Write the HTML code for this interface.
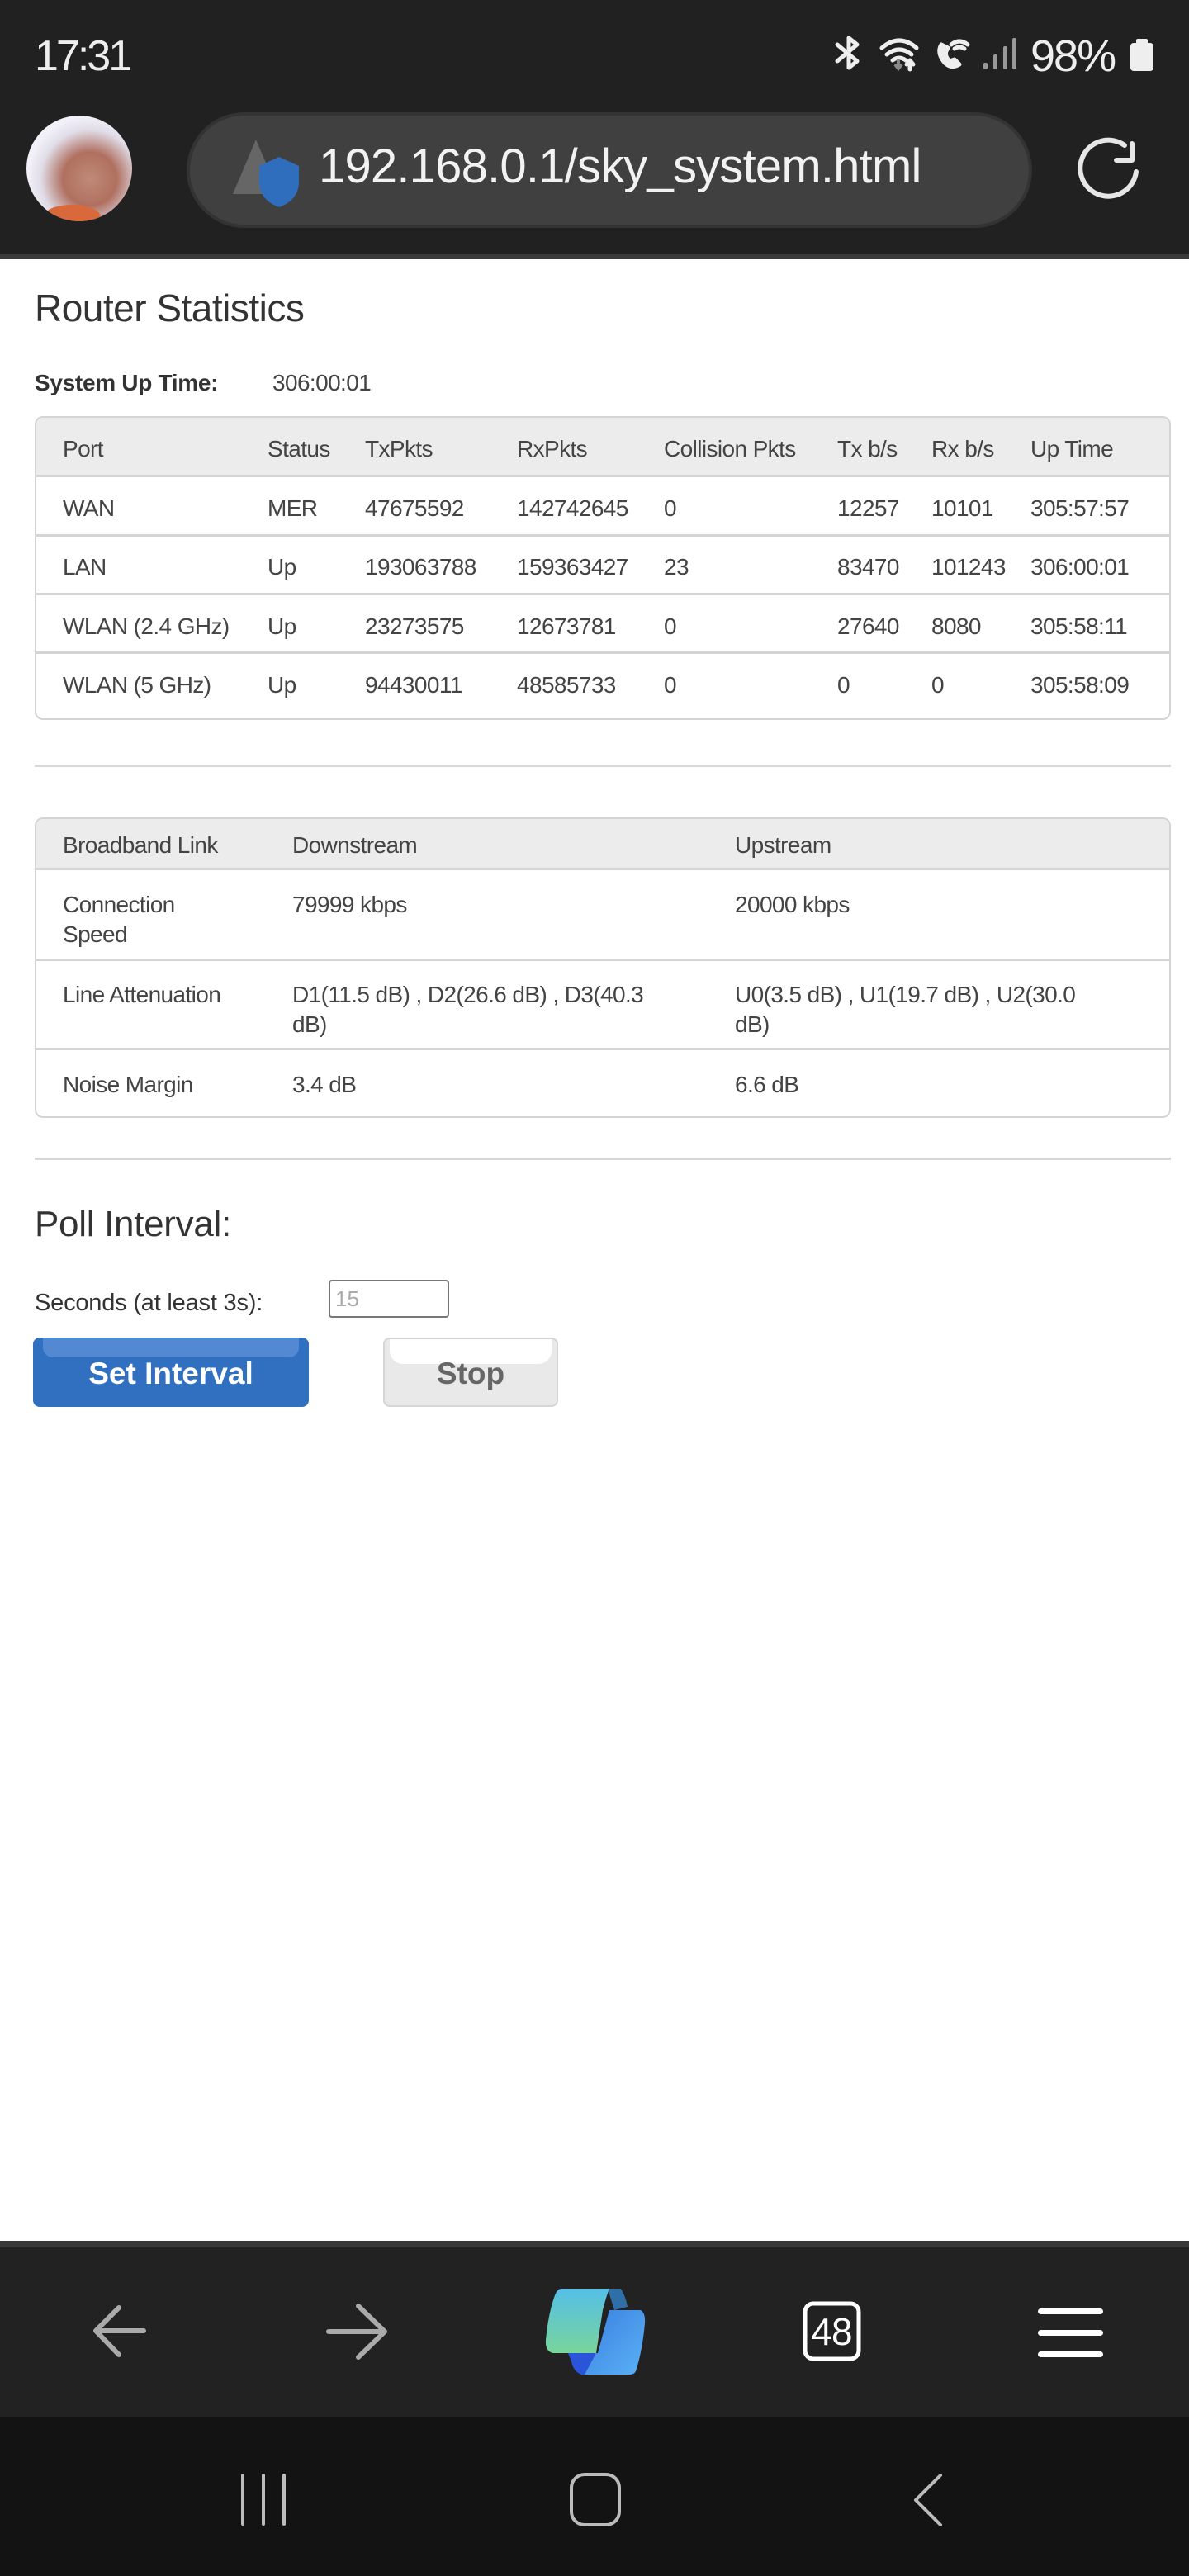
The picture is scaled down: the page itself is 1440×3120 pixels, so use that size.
<!DOCTYPE html>
<html><head><meta charset="utf-8">
<style>
*{margin:0;padding:0;box-sizing:border-box}
html,body{width:1440px;height:3120px;overflow:hidden;background:#fff;font-family:"Liberation Sans",sans-serif}
.a{position:absolute;white-space:nowrap}
.t{font-size:28px;color:#444;letter-spacing:-0.6px;line-height:36px}
</style></head><body>
<!-- top bar -->
<div class="a" style="left:0;top:0;width:1440px;height:310px;background:#212121"></div>
<div class="a" style="left:0;top:308px;width:1440px;height:6px;background:#3a3a3a"></div>
<div class="a" style="left:42px;top:38px;font-size:52px;color:#eee;letter-spacing:-3px">17:31</div>
<svg class="a" style="left:1000px;top:28px" width="440" height="70" viewBox="0 0 440 70">
 <g stroke="#eee" stroke-width="5" fill="none" stroke-linecap="round" stroke-linejoin="round">
  <path d="M14 26 L38 46 L28 54 L28 18 L38 26 L14 46"/>
  <path d="M68 30 Q89 12 110 30 M74 38 Q89 26 104 38 M81 45 Q89 39 97 45"/>
  <path d="M102 56 V46 M98 50 L102 45 L106 50"/>
  <path d="M140 26 Q134 36 144 48 Q152 56 162 50 L156 44 L150 46 Q144 40 146 34 L148 30 Z" fill="#eee"/>
  <path d="M152 26 Q162 18 172 26 M156 31 Q162 27 168 31"/>
 </g>
 <path d="M88 44 v10 m-4 -4 l4 5 l4 -5" stroke="#888" stroke-width="4" fill="none"/>
 <g fill="#999"><rect x="191" y="48" width="5" height="8" rx="2"/><rect x="203" y="38" width="5" height="18" rx="2"/><rect x="215" y="28" width="5" height="28" rx="2"/><rect x="226" y="18" width="5" height="38" rx="2"/></g>
 <rect x="369" y="24" width="28" height="34" rx="4" fill="#eee"/><rect x="376" y="19" width="14" height="6" rx="2" fill="#eee"/>
</svg>
<div class="a" style="left:1248px;top:37px;font-size:54px;color:#eee;letter-spacing:-2px">98%</div>
<!-- avatar -->
<div class="a" style="left:32px;top:140px;width:128px;height:128px;border-radius:50%;background:radial-gradient(circle at 60% 60%,#c08a78 0,#b07060 30%,#e0dde8 55%,#f2f0f8 70%);overflow:hidden"><div style="position:absolute;left:20px;top:108px;width:70px;height:30px;background:#d9683a;border-radius:50%"></div></div>
<!-- url pill -->
<div class="a" style="left:226px;top:136px;width:1024px;height:140px;border-radius:70px;background:#404040;border:4px solid #333"></div>
<svg class="a" style="left:280px;top:165px" width="90" height="90" viewBox="0 0 90 90">
 <path d="M30 4 L2 70 L58 70 Z" fill="#666"/>
 <path d="M58 25 L82 36 V58 Q80 78 58 86 Q36 78 34 58 V36 Z" fill="#2f6dbd"/>
</svg>
<div class="a" style="left:386px;top:168px;font-size:58px;color:#f2f2f2;letter-spacing:-0.8px">192.168.0.1/sky_system.html</div>
<svg class="a" style="left:1300px;top:160px" width="90" height="90" viewBox="0 0 90 90">
 <path d="M76 48 A34 34 0 1 1 62 16" stroke="#e6e6e6" stroke-width="6" fill="none" stroke-linecap="round"/>
 <path d="M52 34 L71 34 L71 14" stroke="#e6e6e6" stroke-width="6" fill="none" stroke-linecap="round" stroke-linejoin="round"/>
</svg>

<!-- content -->
<div class="a" style="left:42px;top:346px;font-size:46px;color:#333;letter-spacing:-0.5px">Router Statistics</div>
<div class="a t" style="left:42px;top:446px;font-weight:bold;color:#333;letter-spacing:-0.3px">System Up Time:</div>
<div class="a t" style="left:330px;top:446px">306:00:01</div>

<div class="a" style="left:42px;top:504px;width:1376px;height:368px;border:2px solid #d4d4d4;border-radius:10px;overflow:hidden">
 <div style="position:absolute;left:0;top:0;width:100%;height:72px;background:#ececec;border-bottom:3px solid #d4d4d4"></div>
 <div style="position:absolute;left:0;top:141px;width:100%;height:3px;background:#d4d4d4"></div>
 <div style="position:absolute;left:0;top:212px;width:100%;height:3px;background:#d4d4d4"></div>
 <div style="position:absolute;left:0;top:283px;width:100%;height:3px;background:#d4d4d4"></div>
</div>
<div class="a t" style="left:76px;top:526px">Port</div><div class="a t" style="left:324px;top:526px">Status</div><div class="a t" style="left:442px;top:526px">TxPkts</div><div class="a t" style="left:626px;top:526px">RxPkts</div><div class="a t" style="left:804px;top:526px">Collision Pkts</div><div class="a t" style="left:1014px;top:526px">Tx b/s</div><div class="a t" style="left:1128px;top:526px">Rx b/s</div><div class="a t" style="left:1248px;top:526px">Up Time</div>
<div class="a t" style="left:76px;top:598px">WAN</div><div class="a t" style="left:324px;top:598px">MER</div><div class="a t" style="left:442px;top:598px">47675592</div><div class="a t" style="left:626px;top:598px">142742645</div><div class="a t" style="left:804px;top:598px">0</div><div class="a t" style="left:1014px;top:598px">12257</div><div class="a t" style="left:1128px;top:598px">10101</div><div class="a t" style="left:1248px;top:598px">305:57:57</div>
<div class="a t" style="left:76px;top:669px">LAN</div><div class="a t" style="left:324px;top:669px">Up</div><div class="a t" style="left:442px;top:669px">193063788</div><div class="a t" style="left:626px;top:669px">159363427</div><div class="a t" style="left:804px;top:669px">23</div><div class="a t" style="left:1014px;top:669px">83470</div><div class="a t" style="left:1128px;top:669px">101243</div><div class="a t" style="left:1248px;top:669px">306:00:01</div>
<div class="a t" style="left:76px;top:741px">WLAN (2.4 GHz)</div><div class="a t" style="left:324px;top:741px">Up</div><div class="a t" style="left:442px;top:741px">23273575</div><div class="a t" style="left:626px;top:741px">12673781</div><div class="a t" style="left:804px;top:741px">0</div><div class="a t" style="left:1014px;top:741px">27640</div><div class="a t" style="left:1128px;top:741px">8080</div><div class="a t" style="left:1248px;top:741px">305:58:11</div>
<div class="a t" style="left:76px;top:812px">WLAN (5 GHz)</div><div class="a t" style="left:324px;top:812px">Up</div><div class="a t" style="left:442px;top:812px">94430011</div><div class="a t" style="left:626px;top:812px">48585733</div><div class="a t" style="left:804px;top:812px">0</div><div class="a t" style="left:1014px;top:812px">0</div><div class="a t" style="left:1128px;top:812px">0</div><div class="a t" style="left:1248px;top:812px">305:58:09</div>

<div class="a" style="left:42px;top:926px;width:1376px;height:3px;background:#d8d8d8"></div>

<div class="a" style="left:42px;top:990px;width:1376px;height:364px;border:2px solid #d4d4d4;border-radius:10px;overflow:hidden">
 <div style="position:absolute;left:0;top:0;width:100%;height:62px;background:#ececec;border-bottom:3px solid #d4d4d4"></div>
 <div style="position:absolute;left:0;top:169px;width:100%;height:3px;background:#d4d4d4"></div>
 <div style="position:absolute;left:0;top:277px;width:100%;height:3px;background:#d4d4d4"></div>
</div>
<div class="a t" style="left:76px;top:1006px">Broadband Link</div><div class="a t" style="left:354px;top:1006px">Downstream</div><div class="a t" style="left:890px;top:1006px">Upstream</div>
<div class="a t" style="left:76px;top:1078px">Connection<br>Speed</div><div class="a t" style="left:354px;top:1078px">79999 kbps</div><div class="a t" style="left:890px;top:1078px">20000 kbps</div>
<div class="a t" style="left:76px;top:1187px">Line Attenuation</div><div class="a t" style="left:354px;top:1187px">D1(11.5 dB) , D2(26.6 dB) , D3(40.3<br>dB)</div><div class="a t" style="left:890px;top:1187px">U0(3.5 dB) , U1(19.7 dB) , U2(30.0<br>dB)</div>
<div class="a t" style="left:76px;top:1296px">Noise Margin</div><div class="a t" style="left:354px;top:1296px">3.4 dB</div><div class="a t" style="left:890px;top:1296px">6.6 dB</div>

<div class="a" style="left:42px;top:1402px;width:1376px;height:3px;background:#d8d8d8"></div>

<div class="a" style="left:42px;top:1458px;font-size:44px;color:#333;letter-spacing:-0.3px">Poll Interval:</div>
<div class="a t" style="left:42px;top:1560px;color:#333;font-size:29px;letter-spacing:-0.2px">Seconds (at least 3s):</div>
<div class="a" style="left:398px;top:1550px;width:146px;height:46px;border:2px solid #777;border-radius:4px;font-size:26px;color:#aaa;padding:6px 6px">15</div>
<div class="a" style="left:40px;top:1620px;width:334px;height:84px;border-radius:8px;background:#3170c1;overflow:hidden;text-align:center">
 <div style="position:absolute;left:12px;top:0;width:310px;height:24px;border-radius:0 0 12px 12px;background:#5388d2"></div>
 <div style="position:relative;line-height:88px;font-size:37px;font-weight:bold;color:#fff;letter-spacing:0">Set Interval</div>
</div>
<div class="a" style="left:464px;top:1620px;width:212px;height:84px;border-radius:8px;background:#e9e9e9;border:2px solid #d5d5d5;overflow:hidden;text-align:center">
 <div style="position:absolute;left:6px;top:0;width:196px;height:30px;border-radius:0 0 16px 16px;background:#fff"></div>
 <div style="position:relative;line-height:84px;font-size:37px;font-weight:bold;color:#666;letter-spacing:0">Stop</div>
</div>

<!-- bottom bar -->
<div class="a" style="left:0;top:2714px;width:1440px;height:10px;background:#3a3a3a"></div>
<div class="a" style="left:0;top:2722px;width:1440px;height:206px;background:#222"></div>
<div class="a" style="left:0;top:2928px;width:1440px;height:192px;background:#131313"></div>
<svg class="a" style="left:0;top:2722px" width="1440" height="206" viewBox="0 0 1440 206">
 <g stroke="#aaa" stroke-width="6" fill="none" stroke-linecap="round" stroke-linejoin="round">
  <path d="M144 73 L116 101 L144 130 M116 101 L174 101"/>
  <path d="M434 71 L466 102 L434 133 M398 102 L466 102"/>
 </g>
 <defs>
  <linearGradient id="g1" x1="0" y1="0" x2="0" y2="1"><stop offset="0" stop-color="#55bfe8"/><stop offset="1" stop-color="#78d59a"/></linearGradient>
  <linearGradient id="g2" x1="0" y1="0" x2="1" y2="1"><stop offset="0" stop-color="#3a7fe0"/><stop offset="1" stop-color="#5ab2f5"/></linearGradient>
 </defs>
 <path d="M736 50 L752 50 Q758 60 760 72 L744 76 Z" fill="#2f6fa8"/>
 <path d="M680 50 L738 50 Q734 60 730 76 L722 128 L670 128 Q660 126 661 112 Q664 80 672 58 Q675 50 680 50 Z" fill="url(#g1)"/>
 <path d="M738 76 L776 76 Q782 80 781 92 Q778 125 770 150 Q768 154 762 154 L708 154 L716 128 L724 128 Z" fill="url(#g2)"/>
 <path d="M688 128 L722 128 L708 154 L704 154 Q694 150 692 138 Z" fill="#2b55d8"/>
 <rect x="975" y="68" width="65" height="67" rx="10" stroke="#fff" stroke-width="5" fill="none"/>
 <text x="1007" y="118" text-anchor="middle" font-family="Liberation Sans,sans-serif" font-size="46" fill="#fff" letter-spacing="-1">48</text>
 <g fill="#fff"><rect x="1257" y="74" width="79" height="7" rx="3.5"/><rect x="1257" y="100" width="79" height="7" rx="3.5"/><rect x="1257" y="126" width="79" height="7" rx="3.5"/></g>
</svg>
<svg class="a" style="left:0;top:2928px" width="1440" height="192" viewBox="0 0 1440 192">
 <g stroke="#bbb" stroke-width="4" fill="none" stroke-linecap="round" stroke-linejoin="round">
  <path d="M294 70 V129 M319 70 V129 M344 70 V129"/>
  <rect x="692" y="69" width="58" height="61" rx="16"/>
  <path d="M1139 70 L1109 100 L1139 130"/>
 </g>
</svg>
</body></html>
